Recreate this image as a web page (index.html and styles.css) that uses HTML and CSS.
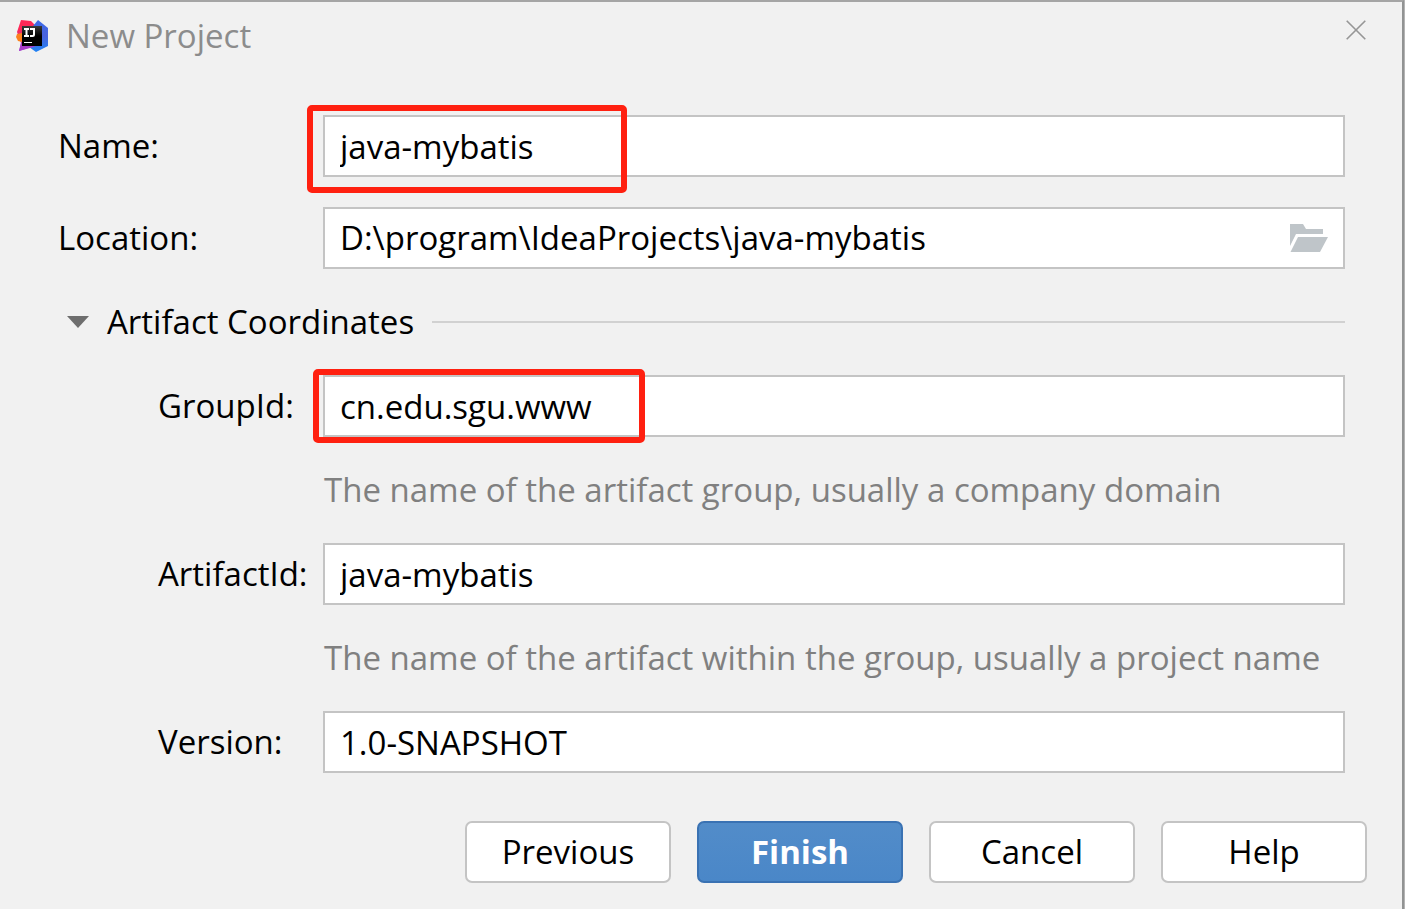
FILE: index.html
```html
<!DOCTYPE html>
<html lang="en">
<head>
  <meta charset="UTF-8">
  <title>New Project</title>
  <link rel="stylesheet" href="styles.css">
</head>
<body>
<div class="dialog">
  <header class="title-bar">
    <svg class="logo" viewBox="0 0 32 32" aria-hidden="true">
      <defs>
        <linearGradient id="pink" x1="0" y1="0" x2="0" y2="1">
          <stop offset="0.3" stop-color="#fe2857"/>
          <stop offset="1" stop-color="#9a3fd5"/>
        </linearGradient>
        <linearGradient id="blue" x1="0" y1="0" x2="0" y2="1">
          <stop offset="0" stop-color="#3b6be8"/>
          <stop offset="0.5" stop-color="#4a62dd"/>
          <stop offset="1" stop-color="#1f83f5"/>
        </linearGradient>
        <linearGradient id="black" x1="0" y1="0" x2="0" y2="1">
          <stop offset="0" stop-color="#3a3a3a"/>
          <stop offset="0.5" stop-color="#000"/>
        </linearGradient>
      </defs>
      <path d="M5 0l10 1 5 5-2 20-15 5 2-8-4-11z" fill="url(#pink)"/>
      <path d="M1 14l5-1v9l-4-1-2-4z" fill="#fc801d"/>
      <path d="M22 0l10 8v18L20 32l-7-5 4-21z" fill="url(#blue)"/>
      <path d="M3 31l2-8h14l1 3-6 2z" fill="#a83bc8"/>
      <path d="M6 6h20v20H6z" fill="url(#black)"/>
      <path d="M8 8h5v2h-1.500v5H13v2H8v-2h1.500v-5H8zM14 8h5v6.500q0 2.500-2.500 2.500H14v-2h2.500q.5 0 .5-.7V10h-3zM8 22h8v1H8z" fill="#fff"/>
    </svg>
    <h1 class="title">New Project</h1>
    <button class="close" type="button" aria-label="Close">
      <svg viewBox="0 0 20 20" aria-hidden="true"><path d="M.7.7l18.600 18.600M19.300.7L.7 19.300" stroke="#969696" stroke-width="1.600"/></svg>
    </button>
  </header>

  <form class="form">
    <div class="row">
      <label class="label" for="name">Name:</label>
      <div class="field">
        <input class="input" id="name" type="text" value="java-mybatis" spellcheck="false">
        <span class="mark mark-name"></span>
      </div>
    </div>
    <div class="row">
      <label class="label" for="location">Location:</label>
      <div class="field input with-icon">
        <input class="bare" id="location" type="text" value="D:\program\IdeaProjects\java-mybatis" spellcheck="false">
        <button class="browse" type="button" aria-label="Browse">
          <svg viewBox="0 0 38 28" aria-hidden="true"><path d="M0 0h13l3 5h17v5H6L0 22zM8 13h30l-8 15H.5z" fill="#bfc5c9"/></svg>
        </button>
      </div>
    </div>
    <button class="section" type="button" aria-expanded="true">
      <svg class="arrow" viewBox="0 0 22 12" aria-hidden="true"><path d="M0 0h22L11 12z" fill="#6e6e6e"/></svg>
      <span>Artifact Coordinates</span>
      <span class="line"></span>
    </button>
    <div class="row">
      <label class="label nested" for="group">GroupId:</label>
      <div class="field">
        <input class="input" id="group" type="text" value="cn.edu.sgu.www" spellcheck="false">
        <span class="mark mark-group"></span>
      </div>
    </div>
    <p class="hint">The name of the artifact group, usually a company domain</p>
    <div class="row">
      <label class="label nested" for="artifact">ArtifactId:</label>
      <div class="field">
        <input class="input" id="artifact" type="text" value="java-mybatis" spellcheck="false">
      </div>
    </div>
    <p class="hint">The name of the artifact within the group, usually a project name</p>
    <div class="row">
      <label class="label nested" for="version">Version:</label>
      <div class="field">
        <input class="input" id="version" type="text" value="1.0-SNAPSHOT" spellcheck="false">
      </div>
    </div>
  </form>

  <footer class="buttons">
    <button class="btn" type="button">Previous</button>
    <button class="btn primary" type="button">Finish</button>
    <button class="btn" type="button">Cancel</button>
    <button class="btn" type="button">Help</button>
  </footer>
</div>
</body>
</html>
```
FILE: styles.css
```css
* {
  box-sizing: border-box;
}
body {
  margin: 0;
  background: #b4b4b4;
  font-family: "Open Sans", "Noto Sans", sans-serif;
  font-size: 33px;
  line-height: 46px;
  color: #000;
}
button,
input {
  font: inherit;
  color: inherit;
}
button {
  padding: 0;
  border: none;
  background: none;
}
svg {
  display: block;
}

.dialog {
  min-height: 100vh;
  margin-right: 1px;
  border-top: 2px solid #a5a5a5;
  border-right: 2px solid #919393;
  background: #f1f1f1;
}

/* title bar */
.title-bar {
  display: flex;
  align-items: center;
  height: 68px;
  padding: 0 36px 0 16px;
}
.logo {
  width: 32px;
  height: 32px;
}
.title {
  flex: 1;
  margin: 0 0 0 18px;
  font-size: 33px;
  font-weight: normal;
  color: #8c8c8c;
}
.close {
  align-self: flex-start;
  padding-top: 18px;
}
.close svg {
  width: 20px;
  height: 20px;
}

/* form */
.form {
  display: flex;
  flex-direction: column;
  gap: 30px;
  padding: 45px 57px 0 58px;
}
.row {
  display: flex;
  align-items: center;
}
.label {
  flex: 0 0 265px;
  white-space: nowrap;
}
.nested {
  padding-left: 100px;
}
.field {
  position: relative;
  flex: 1;
  min-width: 0;
}
.input {
  display: block;
  width: 100%;
  height: 62px;
  padding: 0 15px;
  border: 2px solid #c4c4c4;
  border-radius: 0;
  background: #fff;
  outline: none;
}
.with-icon {
  display: flex;
  align-items: center;
}
.bare {
  flex: 1;
  min-width: 0;
  padding: 0;
  border: none;
  background: none;
  outline: none;
}
.browse svg {
  width: 38px;
  height: 28px;
}
.section {
  display: flex;
  align-items: center;
  padding-left: 9px;
}
.arrow {
  width: 22px;
  height: 12px;
  margin-right: 18px;
}
.line {
  flex: 1;
  height: 2px;
  margin-left: 18px;
  background: #d1d1d1;
}
.hint {
  margin: 0 0 0 266px;
  white-space: nowrap;
  color: #808080;
}

/* red frames over the fields */
.mark {
  position: absolute;
  border: 6px solid #ff2010;
  border-radius: 5px;
  pointer-events: none;
}
.mark-name {
  top: -10px;
  left: -16px;
  width: 320px;
  height: 88px;
}
.mark-group {
  top: -6px;
  left: -10px;
  width: 332px;
  height: 74px;
}

/* buttons */
.buttons {
  display: flex;
  justify-content: flex-end;
  gap: 26px;
  padding: 48px 35px 26px;
}
.btn {
  width: 206px;
  height: 62px;
  border: 2px solid #c4c4c4;
  border-radius: 7px;
  background: #fff;
}
.primary {
  border-color: #3a72b3;
  background: linear-gradient(#528cc9, #4a87c8);
  font-weight: bold;
  color: #fff;
}
```
